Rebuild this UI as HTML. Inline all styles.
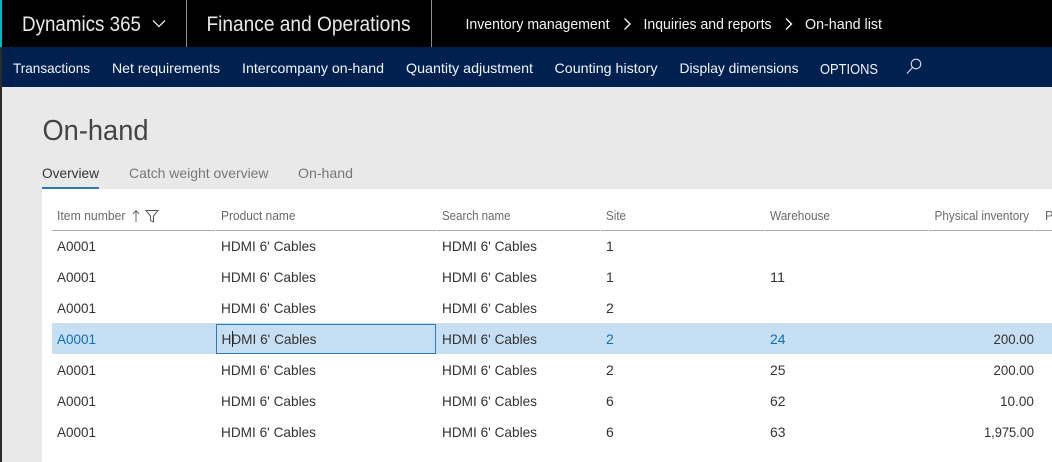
<!DOCTYPE html>
<html><head><meta charset="utf-8"><style>
html,body{margin:0;padding:0;background:#e9e9e9;width:1052px;height:462px;overflow:hidden}
svg{display:block;font-family:"Liberation Sans",sans-serif}
.h{font-size:12.5px;fill:#6a6a6a}
.c{font-size:14px;fill:#333}
.n{font-size:14px;fill:#f2f5fa}
.b{font-size:14.5px;fill:#f4f4f4}
.t{font-size:21px;fill:#e8e8e8}
.l{fill:#106ebe}
</style></head><body>
<svg width="1052" height="462" viewBox="0 0 1052 462" xmlns="http://www.w3.org/2000/svg">
<rect width="1052" height="462" fill="#e9e9e9"/>
<rect width="1052" height="47" fill="#000"/>
<rect width="2" height="47" fill="#00b7c3"/>
<rect y="47" width="1052" height="40" fill="#002050"/>
<rect y="47" width="2" height="415" fill="#2b2b2b"/>
<rect x="186" width="1" height="47" fill="#8a8a8a"/>
<rect x="431" width="1" height="47" fill="#8a8a8a"/>
<text class="t" x="22" y="31" textLength="119" lengthAdjust="spacingAndGlyphs">Dynamics 365</text>
<path d="M153 20.500l6 6 6-6" fill="none" stroke="#e8e8e8" stroke-width="1.300"/>
<text class="t" x="206.500" y="31" textLength="204" lengthAdjust="spacingAndGlyphs">Finance and Operations</text>
<text class="b" x="465.500" y="29" textLength="144" lengthAdjust="spacingAndGlyphs">Inventory management</text>
<path d="M624.500 18.500l5.500 5.500-5.500 5.500" fill="none" stroke="#f4f4f4" stroke-width="1.400"/>
<text class="b" x="643.500" y="29" textLength="128" lengthAdjust="spacingAndGlyphs">Inquiries and reports</text>
<path d="M786 18.500l5.500 5.500-5.500 5.500" fill="none" stroke="#f4f4f4" stroke-width="1.400"/>
<text class="b" x="805" y="29" textLength="77" lengthAdjust="spacingAndGlyphs">On-hand list</text>
<text class="n" x="13" y="73" textLength="77" lengthAdjust="spacingAndGlyphs">Transactions</text>
<text class="n" x="112" y="73" textLength="108" lengthAdjust="spacingAndGlyphs">Net requirements</text>
<text class="n" x="242" y="73" textLength="142" lengthAdjust="spacingAndGlyphs">Intercompany on-hand</text>
<text class="n" x="406" y="73" textLength="127" lengthAdjust="spacingAndGlyphs">Quantity adjustment</text>
<text class="n" x="554.500" y="73" textLength="103" lengthAdjust="spacingAndGlyphs">Counting history</text>
<text class="n" x="679.500" y="73" textLength="119" lengthAdjust="spacingAndGlyphs">Display dimensions</text>
<text x="820" y="74" font-size="15" fill="#f2f5fa" textLength="58" lengthAdjust="spacingAndGlyphs">OPTIONS</text>
<circle cx="916" cy="64" r="4.800" fill="none" stroke="#d5deeb" stroke-width="1.100"/>
<path d="M912.500 67.500L907 73.500" fill="none" stroke="#d5deeb" stroke-width="1.100"/>
<text x="42.500" y="140" font-size="29" fill="#444" textLength="106" lengthAdjust="spacingAndGlyphs">On-hand</text>
<text x="42" y="178" font-size="14" fill="#333" textLength="57" lengthAdjust="spacingAndGlyphs">Overview</text>
<text x="129" y="178" font-size="14" fill="#777" textLength="139.500" lengthAdjust="spacingAndGlyphs">Catch weight overview</text>
<text x="298" y="178" font-size="14" fill="#777" textLength="55" lengthAdjust="spacingAndGlyphs">On-hand</text>
<rect x="42" y="187" width="57" height="2" fill="#2b79bf"/>
<rect x="42" y="189" width="1010" height="273" fill="#fff"/>
<text class="h" x="57" y="220" textLength="68.500" lengthAdjust="spacingAndGlyphs">Item number</text>
<path d="M136 222v-11M133 214l3-3.500 3 3.500" fill="none" stroke="#666" stroke-width="1"/>
<path d="M146 210.500h12l-4.500 5.500v6l-3-1.500v-4.500z" fill="none" stroke="#555" stroke-width="1"/>
<text class="h" x="221" y="220" textLength="74.500" lengthAdjust="spacingAndGlyphs">Product name</text>
<text class="h" x="442" y="220" textLength="68.500" lengthAdjust="spacingAndGlyphs">Search name</text>
<text class="h" x="606" y="220" textLength="20" lengthAdjust="spacingAndGlyphs">Site</text>
<text class="h" x="770" y="220" textLength="60" lengthAdjust="spacingAndGlyphs">Warehouse</text>
<text class="h" x="934.500" y="220" textLength="94.500" lengthAdjust="spacingAndGlyphs">Physical inventory</text>
<text class="h" x="1045" y="220">P</text>
<rect x="52" y="230" width="1000" height="1" fill="#aaa"/>
<rect x="215" y="230" width="1" height="1" fill="#eee"/><rect x="436" y="230" width="1" height="1" fill="#eee"/><rect x="600" y="230" width="1" height="1" fill="#eee"/><rect x="764" y="230" width="1" height="1" fill="#eee"/><rect x="928" y="230" width="1" height="1" fill="#eee"/><rect x="1034" y="230" width="1" height="1" fill="#eee"/>
<rect x="52" y="323" width="1000" height="31" fill="#c7dff2"/>
<rect x="216.500" y="324.500" width="219" height="29" fill="#c7dff2" stroke="#2f79b9" stroke-width="1"/>
<rect x="232" y="331" width="1" height="16" fill="#222"/>

<g class="c">
<text class="c" x="57" y="251" textLength="39" lengthAdjust="spacingAndGlyphs">A0001</text>
<text class="c" x="221" y="251" textLength="95" lengthAdjust="spacingAndGlyphs">HDMI 6' Cables</text>
<text class="c" x="442" y="251" textLength="95" lengthAdjust="spacingAndGlyphs">HDMI 6' Cables</text>
<text class="c" x="606" y="251">1</text>

<text class="c" x="57" y="282" textLength="39" lengthAdjust="spacingAndGlyphs">A0001</text>
<text class="c" x="221" y="282" textLength="95" lengthAdjust="spacingAndGlyphs">HDMI 6' Cables</text>
<text class="c" x="442" y="282" textLength="95" lengthAdjust="spacingAndGlyphs">HDMI 6' Cables</text>
<text class="c" x="606" y="282">1</text>
<text class="c" x="770" y="282" textLength="15" lengthAdjust="spacingAndGlyphs">11</text>

<text class="c" x="57" y="313" textLength="39" lengthAdjust="spacingAndGlyphs">A0001</text>
<text class="c" x="221" y="313" textLength="95" lengthAdjust="spacingAndGlyphs">HDMI 6' Cables</text>
<text class="c" x="442" y="313" textLength="95" lengthAdjust="spacingAndGlyphs">HDMI 6' Cables</text>
<text class="c" x="606" y="313">2</text>

<text class="c l" x="57" y="344" textLength="39" lengthAdjust="spacingAndGlyphs">A0001</text>
<text class="c" x="221.500" y="344" textLength="95" lengthAdjust="spacingAndGlyphs">HDMI 6' Cables</text>
<text class="c" x="442" y="344" textLength="95" lengthAdjust="spacingAndGlyphs">HDMI 6' Cables</text>
<text class="c l" x="606" y="344">2</text>
<text class="c l" x="770" y="344" textLength="15.500" lengthAdjust="spacingAndGlyphs">24</text>
<text class="c" x="993.500" y="344" textLength="40.500" lengthAdjust="spacingAndGlyphs">200.00</text>

<text class="c" x="57" y="375" textLength="39" lengthAdjust="spacingAndGlyphs">A0001</text>
<text class="c" x="221" y="375" textLength="95" lengthAdjust="spacingAndGlyphs">HDMI 6' Cables</text>
<text class="c" x="442" y="375" textLength="95" lengthAdjust="spacingAndGlyphs">HDMI 6' Cables</text>
<text class="c" x="606" y="375">2</text>
<text class="c" x="770" y="375" textLength="15.500" lengthAdjust="spacingAndGlyphs">25</text>
<text class="c" x="993.500" y="375" textLength="40.500" lengthAdjust="spacingAndGlyphs">200.00</text>

<text class="c" x="57" y="406" textLength="39" lengthAdjust="spacingAndGlyphs">A0001</text>
<text class="c" x="221" y="406" textLength="95" lengthAdjust="spacingAndGlyphs">HDMI 6' Cables</text>
<text class="c" x="442" y="406" textLength="95" lengthAdjust="spacingAndGlyphs">HDMI 6' Cables</text>
<text class="c" x="606" y="406">6</text>
<text class="c" x="770" y="406" textLength="15.500" lengthAdjust="spacingAndGlyphs">62</text>
<text class="c" x="1000" y="406" textLength="34" lengthAdjust="spacingAndGlyphs">10.00</text>

<text class="c" x="57" y="437" textLength="39" lengthAdjust="spacingAndGlyphs">A0001</text>
<text class="c" x="221" y="437" textLength="95" lengthAdjust="spacingAndGlyphs">HDMI 6' Cables</text>
<text class="c" x="442" y="437" textLength="95" lengthAdjust="spacingAndGlyphs">HDMI 6' Cables</text>
<text class="c" x="606" y="437">6</text>
<text class="c" x="770" y="437" textLength="15.500" lengthAdjust="spacingAndGlyphs">63</text>
<text class="c" x="984" y="437" textLength="50" lengthAdjust="spacingAndGlyphs">1,975.00</text>
</g>
</svg>
</body></html>
